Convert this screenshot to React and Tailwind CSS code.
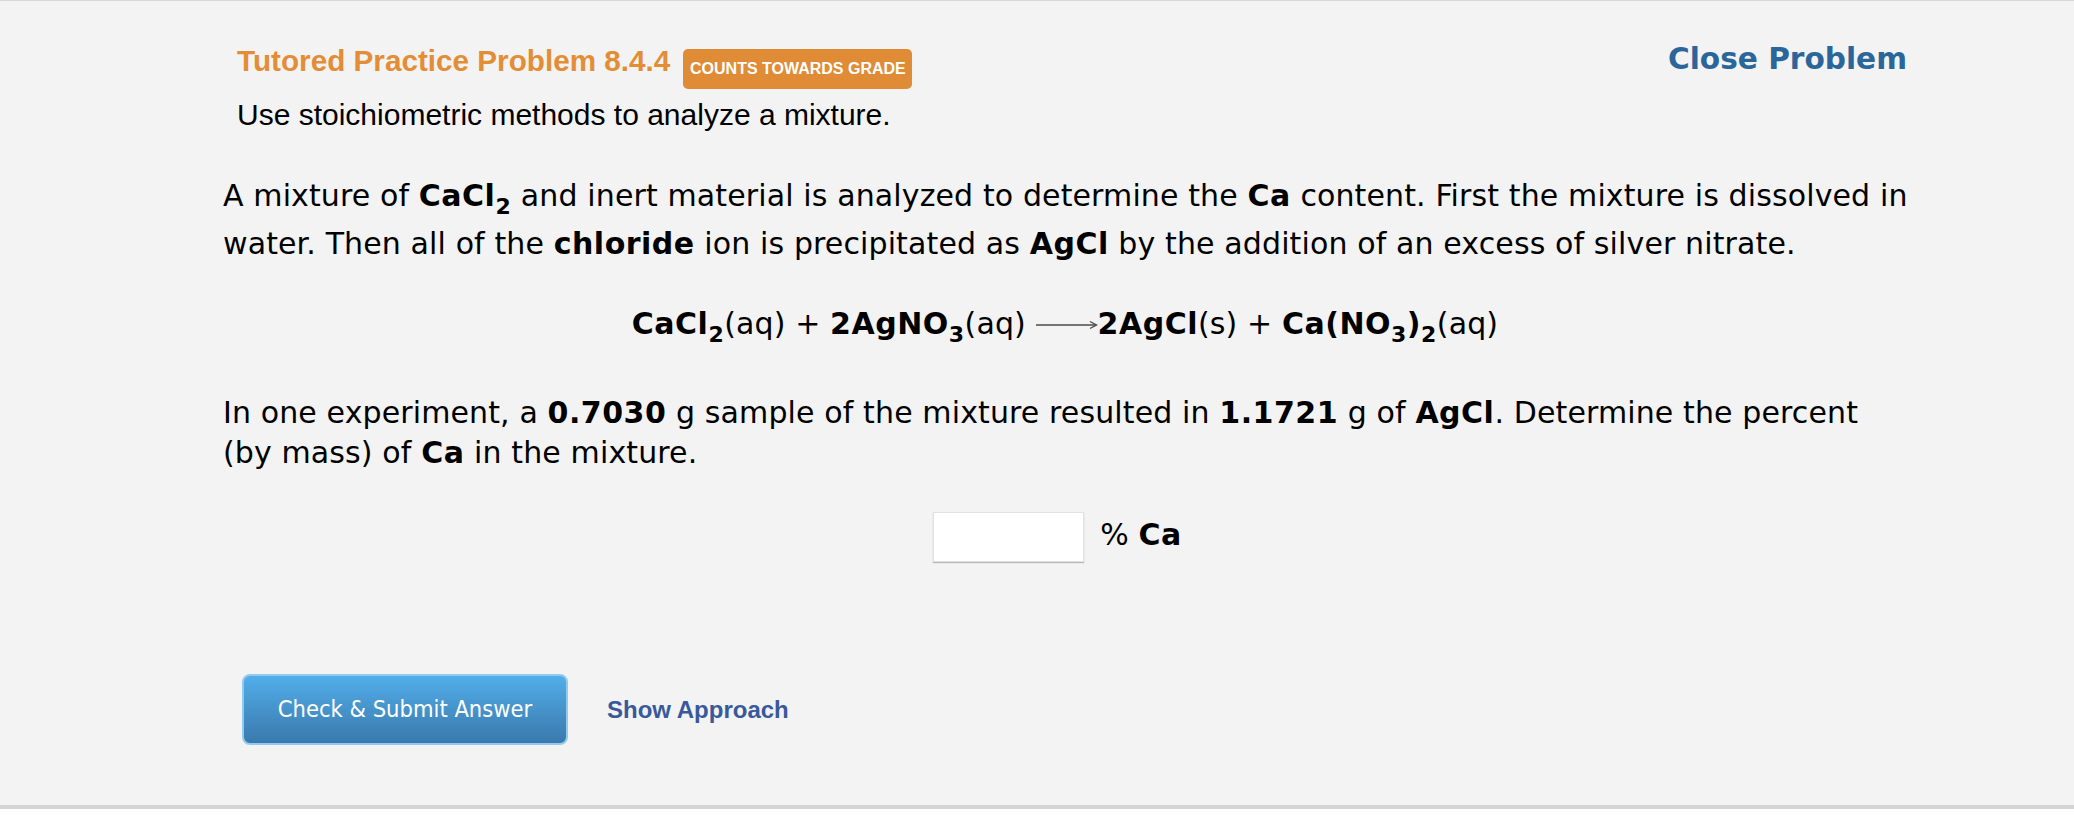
import React from "react";

const Sub = ({ children }) => (
  <span className="text-[22px] leading-[32.5px] align-[-8px]">{children}</span>
);

const B = ({ children }) => <b className="font-bold tracking-[0.5px]">{children}</b>;

const Arrow = () => (
  <svg width="62" height="14" viewBox="0 0 62 14" className="inline-block align-[2px]">
    <line x1="0" y1="7" x2="60" y2="7" stroke="#4a4a4a" strokeWidth="1.6" />
    <path d="M54 3.5 L60.5 7 L54 10.5" fill="none" stroke="#4a4a4a" strokeWidth="1.4" />
  </svg>
);

export default function App() {
  return (
    <div className="w-[2074px] h-[816px] bg-white flex flex-col">
      <div className="border-t border-[#d8d8d8] bg-[#f3f3f3] h-[805px] pt-[41px]">
        <div className="ml-[223px] w-[1684px] text-black">
          {/* header */}
          <div className="flex justify-between items-start pl-[14px]">
            <div className="flex items-start">
              <div className="mt-[2px] font-['Liberation_Sans',Arial,sans-serif] font-bold text-[29.7px] leading-[34px] text-[#e38d36]">
                Tutored Practice Problem 8.4.4
              </div>
              <div className="ml-[13px] mt-[7px] h-[40px] w-[229px] rounded-[5px] bg-[#e08b35] flex items-center justify-center font-['Liberation_Sans',Arial,sans-serif] font-bold text-[16px] text-white">
                COUNTS TOWARDS GRADE
              </div>
            </div>
            <div className="font-['DejaVu_Sans',Verdana,sans-serif] font-bold text-[29.6px] leading-[34px] text-[#2b669b]">
              Close Problem
            </div>
          </div>
          <div className="pl-[14px] mt-[9px] font-['Liberation_Sans',Arial,sans-serif] text-[30px] leading-[34px]">
            Use stoichiometric methods to analyze a mixture.
          </div>

          <div className="font-['DejaVu_Sans',Verdana,sans-serif] text-[30px] leading-[40px] tracking-[0.12px]">
            <p className="mt-[44px] mr-[-16px]">
              A mixture of <B>CaCl<Sub>2</Sub></B> and inert material is analyzed to determine the <B>Ca</B> content. First the mixture is dissolved in water. Then all of the <B>chloride</B> ion is precipitated as <B>AgCl</B> by the addition of an excess of silver nitrate.
            </p>
            <p className="mt-[40px] text-center">
              <B>CaCl<Sub>2</Sub></B>(aq) + <B>2AgNO<Sub>3</Sub></B>(aq) <Arrow /><B>2AgCl</B>(s) + <B>Ca(NO<Sub>3</Sub>)<Sub>2</Sub></B>(aq)
            </p>
            <p className="mt-[42px]">
              In one experiment, a <B>0.7030</B> g sample of the mixture resulted in <B>1.1721</B> g of <B>AgCl</B>. Determine the percent (by mass) of <B>Ca</B> in the mixture.
            </p>
            <div className="mt-[39px] flex justify-center items-start pr-[15px]">
              <div className="w-[151px] h-[50px] bg-white border border-[#e2e2e2] shadow-[0_1px_1px_#b8b8b8]"></div>
              <div className="ml-[16px] mt-[3px]">
                % <B>Ca</B>
              </div>
            </div>
          </div>

          <div className="mt-[112px] pl-[19px] flex items-start">
            <button className="w-[326px] h-[71px] rounded-[8px] border-2 border-[#92caef] bg-gradient-to-b from-[#52aee9] to-[#3a79ad] flex items-center justify-center text-white font-['DejaVu_Sans_Condensed','Liberation_Sans',Arial,sans-serif] text-[23.5px]">
              Check &amp; Submit Answer
            </button>
            <div className="ml-[39px] mt-[22px] font-['Liberation_Sans',Arial,sans-serif] font-bold text-[24px] leading-[28px] text-[#38599b]">
              Show Approach
            </div>
          </div>
        </div>
      </div>
      <div className="h-[4px] bg-[#d4d4d4]"></div>
      <div className="flex-1 bg-white"></div>
    </div>
  );
}
